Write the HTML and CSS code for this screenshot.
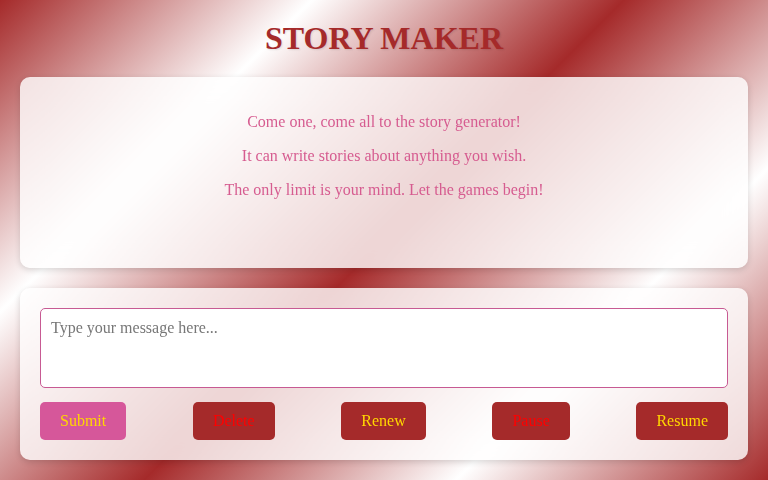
FILE: index.html
```html
<!DOCTYPE html>
<html lang="en">
<head>
<meta charset="utf-8">
<title>Story Maker</title>
<link rel="stylesheet" href="styles.css">
</head>
<body>
  <h1 class="title">STORY MAKER</h1>
  <section class="card intro">
    <p>Come one, come all to the story generator!</p>
    <p>It can write stories about anything you wish.</p>
    <p>The only limit is your mind. Let the games begin!</p>
  </section>
  <section class="card composer">
    <textarea class="message" placeholder="Type your message here..."></textarea>
    <div class="actions">
      <button class="btn btn-submit">Submit</button>
      <button class="btn btn-dark btn-red">Delete</button>
      <button class="btn btn-dark">Renew</button>
      <button class="btn btn-dark btn-red">Pause</button>
      <button class="btn btn-dark">Resume</button>
    </div>
  </section>
</body>
</html>
```
FILE: styles.css
```css
html {
  min-height: 100%;
}

body {
  margin: 0;
  padding: 20px;
  min-height: 480px;
  box-sizing: border-box;
  font-family: "Liberation Serif", "Times New Roman", serif;
  background: linear-gradient(135deg, #a52a2a 0%, #ffffff 25%, #a52a2a 50%, #ffffff 75%, #a52a2a 100%);
  display: flex;
  flex-direction: column;
  gap: 20px;
}

.title {
  margin: 0;
  text-align: center;
  font-size: 32px;
  font-weight: bold;
  line-height: 37px;
  color: #a52a2a;
  text-shadow: 1px 1px 2px rgba(0, 0, 0, 0.1);
}

/* frosted panels */
.card {
  background: rgba(255, 255, 255, 0.8);
  backdrop-filter: blur(12px);
  border-radius: 10px;
  padding: 20px;
  box-shadow: 0 2px 6px rgba(0, 0, 0, 0.15);
}

.intro {
  min-height: 151px;
  text-align: center;
  color: #d65c90;
  font-size: 16px;
}

.intro p {
  margin: 16px 0;
  line-height: 18px;
}

.composer {
  display: flex;
  flex-direction: column;
  gap: 14px;
}

.message {
  display: block;
  box-sizing: border-box;
  width: 100%;
  height: 80px;
  padding: 10px;
  border: 1px solid #c75a93;
  border-radius: 5px;
  background: #ffffff;
  font-family: "Liberation Serif", "Times New Roman", serif;
  font-size: 16px;
  line-height: 18px;
  resize: none;
}

.message::placeholder {
  color: #777777;
}

.actions {
  display: flex;
  justify-content: space-between;
}

.btn {
  border: none;
  border-radius: 5px;
  padding: 10px 20px;
  font-family: "Liberation Serif", "Times New Roman", serif;
  font-size: 16px;
  line-height: 18px;
  color: #ffd700;
  cursor: pointer;
}

.btn-submit {
  background: #d6579a;
}

.btn-dark {
  background: #a52a2a;
}

.btn-red {
  color: #ff0000;
}
```
